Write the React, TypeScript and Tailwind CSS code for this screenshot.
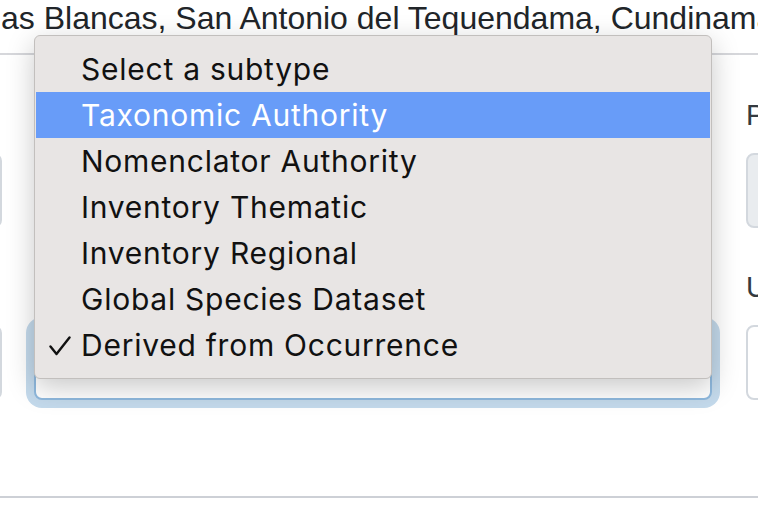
const options = [
  "Select a subtype",
  "Taxonomic Authority",
  "Nomenclator Authority",
  "Inventory Thematic",
  "Inventory Regional",
  "Global Species Dataset",
  "Derived from Occurrence",
];

const highlighted = 1;
const selected = 6;

function SubtypeMenu() {
  return (
    <div className="absolute left-[34px] top-[35px] w-[678px] rounded-[6px] border border-[#c2bfbd] bg-[#e8e5e4] px-px py-[10px] shadow-[0_8px_28px_rgba(0,0,0,0.22)] font-['Inter','Noto_Sans',sans-serif] text-[30px] leading-none tracking-[0.75px]">
      {options.map((opt, i) => (
        <div
          key={opt}
          className={`relative flex h-[46px] items-center pl-[45px] ${
            i === highlighted ? "bg-[#689cf8] text-white" : "text-[#111]"
          }`}
        >
          {i === selected && (
            <span className="absolute left-[13px] top-[14px] text-[#111]">
              <svg width="22" height="20" viewBox="0 0 22 20" fill="none">
                <path d="M1.5 10.5 L7.5 18 L20.5 1.5" stroke="currentColor" strokeWidth="2.4" strokeLinecap="round" strokeLinejoin="round" />
              </svg>
            </span>
          )}
          <span>{opt}</span>
        </div>
      ))}
    </div>
  );
}

function Field({ label, disabled, focused }: { label?: string; disabled?: boolean; focused?: boolean }) {
  return (
    <div className="flex flex-col">
      <div className="h-[53px] pt-[1px] text-[29px] leading-none text-[#343a40]">{label}</div>
      <div
        className={`h-[75px] rounded-[8px] border-2 ${
          focused ? "border-[#8fb9de] bg-white shadow-[0_0_0_8px_#c4daec]" : disabled ? "border-[#d3d8de] bg-[#e9ecef]" : "border-[#d3d8de] bg-white"
        }`}
      />
    </div>
  );
}

export default function App() {
  return (
    <div className="relative h-[526px] w-[758px] overflow-hidden bg-white font-['Liberation_Sans',Arial,sans-serif]">
      <div className="h-[53px] whitespace-nowrap pl-[1px] text-[32px] leading-[36px] text-[#212529]">
        as Blancas, San Antonio del Tequendama, Cundinamarca, Colombia
      </div>
      <div className="h-[2px] bg-[#d6d7db]" />

      <div className="ml-[-234px] flex pt-[45px]">
        <div className="flex w-[236px] shrink-0 flex-col gap-[44px]">
          <Field disabled />
          <Field />
        </div>
        <div className="ml-[32px] flex w-[678px] shrink-0 flex-col gap-[44px]">
          <Field />
          <Field focused />
        </div>
        <div className="ml-[34px] flex w-[240px] shrink-0 flex-col gap-[44px]">
          <Field label="Pub date" disabled />
          <Field label="URL" />
        </div>
      </div>

      <div className="mt-[96px] h-[2px] bg-[#cdd0d6]" />

      <SubtypeMenu />
    </div>
  );
}
